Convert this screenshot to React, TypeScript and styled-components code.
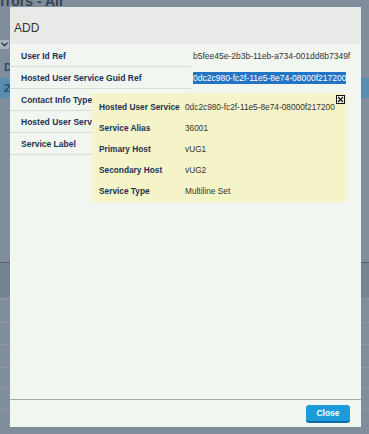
import React from 'react';
import styled, { createGlobalStyle } from 'styled-components';

const GlobalStyle = createGlobalStyle`
  html, body {
    margin: 0;
    padding: 0;
    overflow: hidden;
    font-family: "Liberation Sans", Arial, sans-serif;
  }
`;

const FIELDS = [
  { label: 'User Id Ref', value: 'b5fee45e-2b3b-11eb-a734-001dd8b7349f' },
  { label: 'Hosted User Service Guid Ref', value: '0dc2c980-fc2f-11e5-8e74-08000f217200', selected: true },
  { label: 'Contact Info Type', value: '' },
  { label: 'Hosted User Service Name', value: '' },
  { label: 'Service Label', value: '' },
];

const DETAILS = [
  { label: 'Hosted User Service', value: '0dc2c980-fc2f-11e5-8e74-08000f217200' },
  { label: 'Service Alias', value: '36001' },
  { label: 'Primary Host', value: 'vUG1' },
  { label: 'Secondary Host', value: 'vUG2' },
  { label: 'Service Type', value: 'Multiline Set' },
];

// the page behind the dialog, already dimmed by the mask
const Page = styled.div`
  position: relative;
  width: 100%;
  height: 434px;
  background: #7f8e9a;
  overflow: hidden;
  display: flex;
  flex-direction: column;
`;

const PageTitle = styled.div`
  margin: -6px 0 0 -9px;
  height: 14px;
  font-size: 14px;
  font-weight: bold;
  line-height: 14px;
  color: #35424d;
`;

const Toolbar = styled.div`
  margin-top: 32px;
  display: flex;
  height: 9px;
`;

const Dropdown = styled.div`
  width: 9px;
  height: 9px;
  background: #aab4bc;
  display: flex;
  align-items: center;
  justify-content: center;
`;

const BgRow = styled.div<{ $h: number; $bg?: string; $line?: string; $top?: string }>`
  height: ${(p) => p.$h}px;
  flex: none;
  background: ${(p) => p.$bg || 'transparent'};
  border-bottom: 1px solid ${(p) => p.$line || 'transparent'};
  border-top: ${(p) => (p.$top ? `1px solid ${p.$top}` : 'none')};
  font-size: 11px;
  font-weight: bold;
  color: #2b4a68;
  padding-left: 4px;
  display: flex;
  align-items: center;
`;

const FootLine = styled.div`
  margin: 14px 0 0 8px;
  width: 55px;
  height: 1px;
  background: #98a5ae;
`;

const Dialog = styled.div`
  position: absolute;
  left: 10px;
  top: 7px;
  width: 351px;
  height: 420px;
  background: #f1f6f1;
  display: flex;
  flex-direction: column;
`;

const Header = styled.div`
  height: 38px;
  flex: none;
  background: #e7eae7;
  border-bottom: 1px solid #f7faf7;
  padding: 4px 0 0 4px;
  box-sizing: border-box;
  display: flex;
  align-items: center;
  font-size: 12px;
  color: #333;
`;

const Body = styled.div`
  position: relative;
  flex: 1;
`;

const FieldGrid = styled.div`
  display: grid;
  grid-template-columns: 181px 1fr;
`;

const Label = styled.div`
  height: 21px;
  border-bottom: 1px solid #d5dbd5;
  padding-left: 11px;
  display: flex;
  align-items: center;
  font-size: 8.5px;
  font-weight: bold;
  color: #1d3150;
  white-space: nowrap;
  overflow: hidden;
`;

const Value = styled.div`
  height: 22px;
  padding-left: 2px;
  display: flex;
  align-items: center;
  font-size: 8.5px;
  color: #333;
  white-space: nowrap;
`;

const Selected = styled.span`
  background: #2474c6;
  color: #fff;
  padding: 1px 0;
`;

const Popup = styled.div`
  position: absolute;
  left: 82px;
  top: 48px;
  width: 255px;
  height: 109px;
  box-sizing: border-box;
  background: #f5f3c8;
  padding: 3px 0 0 7px;
  display: grid;
  grid-template-columns: 86px 1fr;
  grid-auto-rows: 21px;
`;

const PopLabel = styled.div`
  display: flex;
  align-items: center;
  font-size: 8.3px;
  font-weight: bold;
  color: #1d3150;
  white-space: nowrap;
`;

const PopValue = styled.div`
  display: flex;
  align-items: center;
  font-size: 8.3px;
  color: #333;
  white-space: nowrap;
`;

const CloseBox = styled.div`
  position: absolute;
  right: 2px;
  top: 2px;
  width: 9px;
  height: 9px;
  display: flex;
`;

const Footer = styled.div`
  height: 28px;
  flex: none;
  border-top: 1px solid #a7aba7;
  display: flex;
  justify-content: flex-end;
  align-items: flex-start;
  padding: 5px 11px 0 0;
  box-sizing: border-box;
`;

const CloseButton = styled.button`
  width: 44px;
  height: 18px;
  padding: 0;
  border: none;
  border-bottom: 2px solid #0d6ca3;
  border-radius: 3px;
  background: #1b9bd9;
  color: #fff;
  font-family: "Liberation Sans", Arial, sans-serif;
  font-size: 8.5px;
  font-weight: bold;
`;

const App = () => {
  return (
    <>
      <GlobalStyle />
      <Page>
        <PageTitle>Errors - All</PageTitle>
        <Toolbar>
          <Dropdown>
            <svg width="7" height="5" viewBox="0 0 7 5">
              <path d="M0.5 0.8 L3.5 3.8 L6.5 0.8" stroke="#2b3845" strokeWidth="1.4" fill="none" />
            </svg>
          </Dropdown>
        </Toolbar>
        <BgRow $h={20} style={{ marginTop: 8 }}>D</BgRow>
        <BgRow $h={19} $bg="#5a8cb2">2</BgRow>
        <BgRow $h={163} />
        <BgRow $h={35} $bg="#74838f" $top="#55626d" $line="#8d9aa4" />
        <BgRow $h={23} $line="#8d9aa4" />
        <BgRow $h={21} $line="#8d9aa4" />
        <BgRow $h={22} $line="#8d9aa4" />
        <BgRow $h={20} $line="#8d9aa4" />
        <BgRow $h={20} $line="#8d9aa4" />
        <FootLine />

        <Dialog>
          <Header>ADD</Header>
          <Body>
            <FieldGrid>
              {FIELDS.map((f) => (
                <React.Fragment key={f.label}>
                  <Label>{f.label}</Label>
                  <Value>{f.selected ? <Selected>{f.value}</Selected> : f.value}</Value>
                </React.Fragment>
              ))}
            </FieldGrid>
            <Popup>
              {DETAILS.map((d) => (
                <React.Fragment key={d.label}>
                  <PopLabel>{d.label}</PopLabel>
                  <PopValue>{d.value}</PopValue>
                </React.Fragment>
              ))}
              <CloseBox>
                <svg width="9" height="9" viewBox="0 0 9 9">
                  <rect x="0.5" y="0.5" width="8" height="8" fill="#f8f8f0" stroke="#111" />
                  <path d="M2 2 L7 7 M7 2 L2 7" stroke="#111" strokeWidth="1.2" />
                </svg>
              </CloseBox>
            </Popup>
          </Body>
          <Footer>
            <CloseButton>Close</CloseButton>
          </Footer>
        </Dialog>
      </Page>
    </>
  );
};

export default App;
